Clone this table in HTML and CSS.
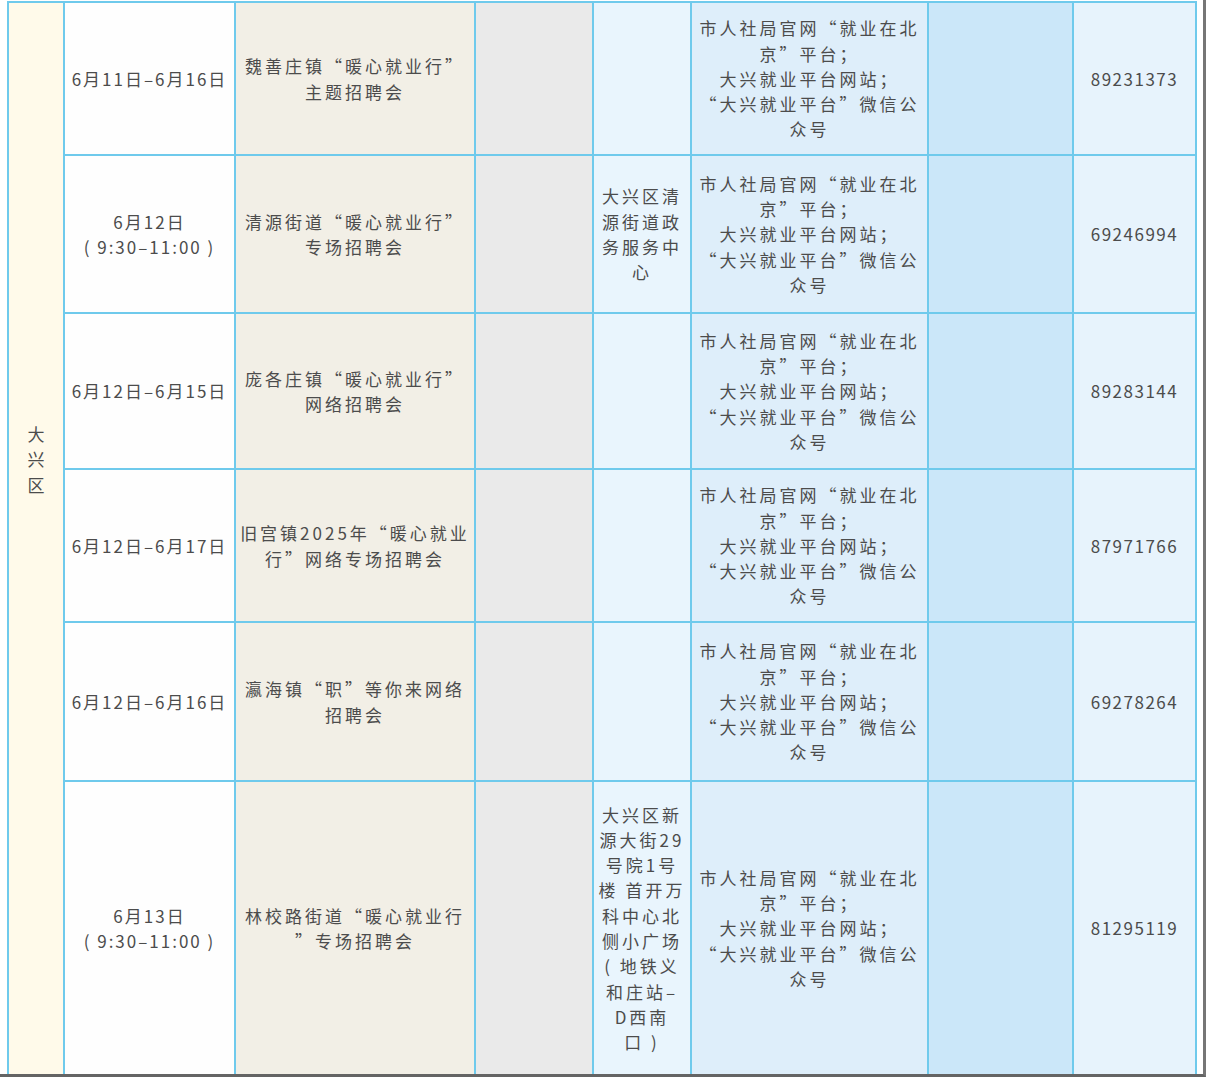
FILE: index.html
```html
<!DOCTYPE html>
<html lang="zh-CN">
<head>
<meta charset="utf-8">
<title>大兴区招聘会</title>
<link rel="stylesheet" href="styles.css">
</head>
<body>
<div class="frame">
  <div class="grid">
    <div class="cell district">大<br>兴<br>区</div>

    <div class="cell date">6月11日–6月16日</div>
    <div class="cell name">魏善庄镇“暖心就业行”<br>主题招聘会</div>
    <div class="cell blank"></div>
    <div class="cell loc"></div>
    <div class="cell platform">市人社局官网“就业在北<br>京”平台；<br>大兴就业平台网站；<br>“大兴就业平台”微信公<br>众号</div>
    <div class="cell extra"></div>
    <div class="cell phone">89231373</div>

    <div class="cell date">6月12日<br>( 9:30–11:00 )</div>
    <div class="cell name">清源街道“暖心就业行”<br>专场招聘会</div>
    <div class="cell blank"></div>
    <div class="cell loc">大兴区清<br>源街道政<br>务服务中<br>心</div>
    <div class="cell platform">市人社局官网“就业在北<br>京”平台；<br>大兴就业平台网站；<br>“大兴就业平台”微信公<br>众号</div>
    <div class="cell extra"></div>
    <div class="cell phone">69246994</div>

    <div class="cell date">6月12日–6月15日</div>
    <div class="cell name">庞各庄镇“暖心就业行”<br>网络招聘会</div>
    <div class="cell blank"></div>
    <div class="cell loc"></div>
    <div class="cell platform">市人社局官网“就业在北<br>京”平台；<br>大兴就业平台网站；<br>“大兴就业平台”微信公<br>众号</div>
    <div class="cell extra"></div>
    <div class="cell phone">89283144</div>

    <div class="cell date">6月12日–6月17日</div>
    <div class="cell name">旧宫镇2025年“暖心就业<br>行”网络专场招聘会</div>
    <div class="cell blank"></div>
    <div class="cell loc"></div>
    <div class="cell platform">市人社局官网“就业在北<br>京”平台；<br>大兴就业平台网站；<br>“大兴就业平台”微信公<br>众号</div>
    <div class="cell extra"></div>
    <div class="cell phone">87971766</div>

    <div class="cell date">6月12日–6月16日</div>
    <div class="cell name">瀛海镇“职”等你来网络<br>招聘会</div>
    <div class="cell blank"></div>
    <div class="cell loc"></div>
    <div class="cell platform">市人社局官网“就业在北<br>京”平台；<br>大兴就业平台网站；<br>“大兴就业平台”微信公<br>众号</div>
    <div class="cell extra"></div>
    <div class="cell phone">69278264</div>

    <div class="cell date">6月13日<br>( 9:30–11:00 )</div>
    <div class="cell name">林校路街道“暖心就业行<br>”专场招聘会</div>
    <div class="cell blank"></div>
    <div class="cell loc">大兴区新<br>源大街29<br>号院1号<br>楼 首开万<br>科中心北<br>侧小广场<br>( 地铁义<br>和庄站–<br>D西南<br>口 )</div>
    <div class="cell platform">市人社局官网“就业在北<br>京”平台；<br>大兴就业平台网站；<br>“大兴就业平台”微信公<br>众号</div>
    <div class="cell extra"></div>
    <div class="cell phone">81295119</div>
  </div>
</div>
</body>
</html>
```

FILE: styles.css
```css
html, body {
  margin: 0;
  padding: 0;
  background: #ffffff;
}

.frame {
  width: 1206px;
  height: 1077px;
  border-right: 3px solid #767676;
  border-bottom: 3px solid #646464;
  overflow: hidden;
  padding: 1px 0 0 7px;
  box-sizing: border-box;
  background: #ffffff;
}

.grid {
  display: grid;
  grid-template-columns: 56px 171px 240px 118px 98px 237px 145px 123px;
  grid-template-rows: 153px 158px 156px 153px 159px 294px;
  border-left: 2px solid #6fcaec;
  border-top: 2px solid #6fcaec;
  width: max-content;
  font-family: "Noto Sans CJK SC", "Liberation Sans", sans-serif;
  font-size: 17px;
  line-height: 25.3px;
  color: #4c4c4c;
}

.cell {
  box-sizing: border-box;
  border-right: 2px solid #6fcaec;
  border-bottom: 2px solid #6fcaec;
  display: flex;
  align-items: center;
  justify-content: center;
  text-align: center;
  white-space: pre-line;
  letter-spacing: 3px;
}

.district {
  grid-row: 1 / -1;
  background: #fffaea;
  align-items: flex-start;
  padding-top: 418px;
  letter-spacing: 0;
}

.date {
  background: #fefefe;
  letter-spacing: 2px;
}

.name {
  background: #f2efe6;
}

.blank {
  background: #eaeaea;
}

.loc {
  background: #e9f5fd;
  letter-spacing: 3px;
}

.platform {
  background: #deeefa;
}

.extra {
  background: #cbe7f9;
}

.phone {
  background: #e7f3fc;
  letter-spacing: 1.5px;
}
```
